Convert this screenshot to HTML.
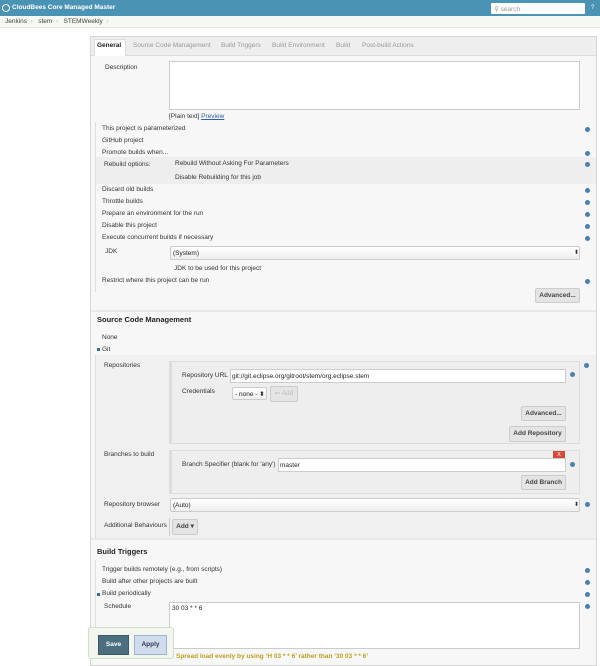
<!DOCTYPE html>
<html><head><meta charset="utf-8"><style>
*{margin:0;padding:0;box-sizing:border-box}
body{width:600px;height:658px;overflow:hidden;background:#fff;font-family:"Liberation Sans",sans-serif;font-size:6.5px;color:#333;position:relative}
.a{position:absolute;white-space:nowrap}
.hdr{left:0;top:0;width:600px;height:16px;background:#4a93b4}
.bc{left:0;top:16px;width:600px;height:12px;background:#f6f8f2;border-bottom:1px solid #e3e6dd}
.panel{left:90px;top:36px;width:507px;height:630px;background:#f7f7f7;border:1px solid #d6d6d6}
.tabs{left:91px;top:37px;width:505px;height:19px;background:#eee;border-bottom:1px solid #ddd}
.inp{background:#fff;border:1px solid #ccc}
.sel{background:linear-gradient(#fff,#eee);border:1px solid #ccc;border-radius:2px}
.btn{background:#e4e4e4;border:1px solid #ccc;border-radius:2px;font-weight:bold;color:#444;text-align:center}
.h{width:5px;height:5px;border-radius:3px;background:#4a7fb0;left:585px}
.box{background:#eee;border:1px solid #ddd;border-left:3px solid #ddd}
.d{color:#bbb}
</style></head><body>
<div class="a hdr"></div>
<div class="a" style="left:2px;top:4px;width:8px;height:8px;border:1.5px solid #fff;border-radius:4px"></div>
<div class="a" style="left:12px;top:4px;color:#fff;font-weight:bold;font-size:6.5px">CloudBees Core Managed Master</div>
<div class="a" style="left:491px;top:3px;width:94px;height:11px;background:#fff;border-radius:1px"></div>
<div class="a" style="left:494px;top:5px;color:#999">⚲ search</div>
<div class="a" style="left:591px;top:5px;color:#fff;font-size:6px">?</div>
<div class="a bc"></div>
<div class="a" style="left:5px;top:18px;color:#444">Jenkins &nbsp;<span class="d">›</span>&nbsp;&nbsp; stem &nbsp;<span class="d">›</span>&nbsp;&nbsp; STEMWeekly &nbsp;<span class="d">›</span></div>
<div class="a panel"></div>
<div class="a tabs"></div>
<div class="a" style="left:94px;top:39px;width:32px;height:17px;background:#fff;border:1px solid #ddd;border-bottom:none"></div>
<div class="a" style="left:97px;top:42px;font-weight:bold;color:#222">General</div>
<div class="a" style="left:133px;top:42px;color:#999">Source Code Management</div>
<div class="a" style="left:221px;top:42px;color:#999">Build Triggers</div>
<div class="a" style="left:272px;top:42px;color:#999">Build Environment</div>
<div class="a" style="left:336px;top:42px;color:#999">Build</div>
<div class="a" style="left:362px;top:42px;color:#999">Post-build Actions</div>

<div class="a" style="left:105px;top:64px">Description</div>
<div class="a inp" style="left:169px;top:61px;width:411px;height:49px"></div>
<div class="a" style="left:169px;top:113px">[Plain text] <span style="color:#2e5fa7;text-decoration:underline">Preview</span></div>

<div class="a" style="left:95px;top:122px;width:1px;height:170px;background:#ddd"></div>
<div class="a" style="left:102px;top:125px">This project is parameterized</div><div class="a h" style="top:127px"></div>
<div class="a" style="left:102px;top:137px">GitHub project</div>
<div class="a" style="left:102px;top:149px">Promote builds when...</div><div class="a h" style="top:151px"></div>
<div class="a" style="left:96px;top:157px;width:500px;height:27px;background:#eee"></div>
<div class="a" style="left:104px;top:161px">Rebuild options:</div>
<div class="a" style="left:175px;top:160px">Rebuild Without Asking For Parameters</div><div class="a h" style="top:162px"></div>
<div class="a" style="left:175px;top:174px">Disable Rebuilding for this job</div>
<div class="a" style="left:102px;top:186px">Discard old builds</div><div class="a h" style="top:188px"></div>
<div class="a" style="left:102px;top:198px">Throttle builds</div><div class="a h" style="top:200px"></div>
<div class="a" style="left:102px;top:210px">Prepare an environment for the run</div><div class="a h" style="top:212px"></div>
<div class="a" style="left:102px;top:222px">Disable this project</div><div class="a h" style="top:224px"></div>
<div class="a" style="left:102px;top:234px">Execute concurrent builds if necessary</div><div class="a h" style="top:236px"></div>
<div class="a" style="left:105px;top:248px">JDK</div>
<div class="a sel" style="left:170px;top:246px;width:410px;height:14px"></div>
<div class="a" style="left:173px;top:250px;color:#222">(System)</div>
<div class="a" style="left:574px;top:249px;font-size:6px">⬍</div>
<div class="a" style="left:174px;top:265px">JDK to be used for this project</div>
<div class="a" style="left:102px;top:277px">Restrict where this project can be run</div><div class="a h" style="top:279px"></div>
<div class="a btn" style="left:535px;top:288px;width:45px;height:15px;line-height:13px">Advanced...</div>

<div class="a" style="left:91px;top:310px;width:505px;height:2px;background:#e8e8e8"></div>
<div class="a" style="left:97px;top:315px;font-weight:bold;font-size:7.5px;color:#222">Source Code Management</div>
<div class="a" style="left:102px;top:334px">None</div>
<div class="a" style="left:97px;top:348px;width:3px;height:3px;background:#2e6fa7"></div>
<div class="a" style="left:102px;top:346px">Git</div>
<div class="a" style="left:95px;top:355px;width:501px;height:183px;background:#f0f0f0;border-left:1px solid #ddd"></div>
<div class="a" style="left:104px;top:362px">Repositories</div>
<div class="a box" style="left:169px;top:361px;width:411px;height:83px"></div>
<div class="a" style="left:182px;top:372px">Repository URL</div>
<div class="a inp" style="left:230px;top:369px;width:336px;height:14px"></div>
<div class="a" style="left:232px;top:373px;color:#222">git://git.eclipse.org/gitroot/stem/org.eclipse.stem</div>
<div class="a h" style="left:570px;top:372px"></div><div class="a h" style="top:363px;left:584px"></div>
<div class="a" style="left:182px;top:388px">Credentials</div>
<div class="a sel" style="left:232px;top:387px;width:35px;height:13px"></div>
<div class="a" style="left:235px;top:390px;color:#222">- none - ⬍</div>
<div class="a btn" style="left:270px;top:386px;width:28px;height:16px;line-height:14px;color:#bbb;font-weight:normal">⇐ Add</div>
<div class="a btn" style="left:521px;top:406px;width:45px;height:15px;line-height:13px">Advanced...</div>
<div class="a btn" style="left:509px;top:426px;width:57px;height:16px;line-height:14px">Add Repository</div>
<div class="a" style="left:104px;top:451px">Branches to build</div>
<div class="a box" style="left:169px;top:450px;width:411px;height:44px"></div>
<div class="a" style="left:553px;top:451px;width:12px;height:8px;background:#d24a3a;color:#fff;font-size:5.5px;text-align:center;line-height:8px">X</div>
<div class="a" style="left:182px;top:461px">Branch Specifier (blank for 'any')</div>
<div class="a inp" style="left:278px;top:458px;width:288px;height:14px"></div>
<div class="a" style="left:280px;top:462px;color:#222">master</div>
<div class="a h" style="left:570px;top:462px"></div>
<div class="a btn" style="left:521px;top:475px;width:45px;height:15px;line-height:13px">Add Branch</div>
<div class="a" style="left:104px;top:501px">Repository browser</div>
<div class="a sel" style="left:170px;top:498px;width:410px;height:14px"></div>
<div class="a" style="left:173px;top:502px;color:#222">(Auto)</div>
<div class="a" style="left:574px;top:501px;font-size:6px">⬍</div><div class="a h" style="top:502px"></div>
<div class="a" style="left:104px;top:522px">Additional Behaviours</div>
<div class="a" style="left:169px;top:518px;width:1px;height:18px;background:#ccc"></div>
<div class="a btn" style="left:172px;top:519px;width:26px;height:16px;line-height:14px">Add ▾</div>

<div class="a" style="left:91px;top:538px;width:505px;height:2px;background:#e8e8e8"></div>
<div class="a" style="left:97px;top:547px;font-weight:bold;font-size:7.5px;color:#222">Build Triggers</div>
<div class="a" style="left:95px;top:560px;width:1px;height:98px;background:#ddd"></div>
<div class="a" style="left:102px;top:566px">Trigger builds remotely (e.g., from scripts)</div><div class="a h" style="top:568px"></div>
<div class="a" style="left:102px;top:578px">Build after other projects are built</div><div class="a h" style="top:580px"></div>
<div class="a" style="left:97px;top:593px;width:3px;height:3px;background:#2e6fa7"></div>
<div class="a" style="left:102px;top:590px">Build periodically</div><div class="a h" style="top:592px"></div>
<div class="a" style="left:104px;top:603px">Schedule</div>
<div class="a inp" style="left:169px;top:602px;width:411px;height:47px"></div>
<div class="a" style="left:172px;top:605px;color:#222">30 03 * * 6</div><div class="a h" style="top:604px"></div>
<div class="a" style="left:176px;top:653px;color:#b8a020;font-weight:bold">Spread load evenly by using ‘H 03 * * 6’ rather than ‘30 03 * * 6’</div>
<div class="a" style="left:88px;top:627px;width:86px;height:32px;background:#f3f6ee;border:1px solid #cfe0c8;border-radius:3px"></div>
<div class="a" style="left:98px;top:635px;width:31px;height:20px;background:#4c6f80;border:1px solid #3b5a68;color:#fff;font-weight:bold;text-align:center;line-height:18px">Save</div>
<div class="a" style="left:134px;top:635px;width:33px;height:20px;background:#cfdcec;border:1px solid #9ab3d0;color:#335;font-weight:bold;text-align:center;line-height:18px">Apply</div>
</body></html>
